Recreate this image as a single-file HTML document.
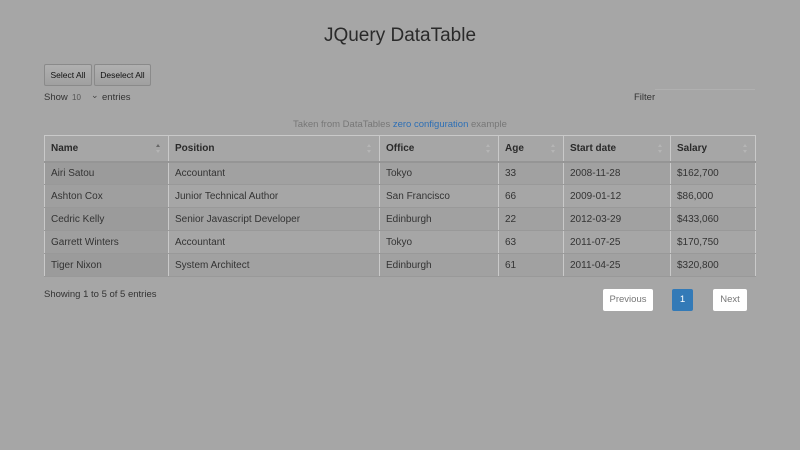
<!DOCTYPE html>
<html><head><meta charset="utf-8"><style>
*{box-sizing:border-box;margin:0;padding:0}
body{width:800px;height:450px;background:#a6a6a6;font-family:"Liberation Sans",sans-serif;color:#333;position:relative;overflow:hidden}
.a{position:absolute}
h1{position:absolute;top:25px;left:0;width:800px;text-align:center;font-weight:normal;font-size:19px;color:#2a2a2a}
.btn{position:absolute;top:64px;height:22px;border:1px solid #8a8a8a;background:linear-gradient(#b0b0b0,#a0a0a0);font-size:8.5px;color:#111;text-align:center;line-height:20px;border-radius:2px}
table{position:absolute;left:44px;top:135px;width:712px;border-collapse:collapse;font-size:10px}
th,td{border-left:1px solid #c9c9c9;border-right:1px solid #c9c9c9;text-align:left}
th{height:26px;padding-left:6px;font-weight:bold;color:#2a2a2a;border-top:1px solid #c9c9c9;border-bottom:2px solid #959595;position:relative}
th:after{content:"";position:absolute;right:8px;top:8px;width:0;height:0;border-left:2.5px solid transparent;border-right:2.5px solid transparent;border-bottom:3px solid #b5b5b5;}
th:before{content:"";position:absolute;right:8px;top:14px;width:0;height:0;border-left:2.5px solid transparent;border-right:2.5px solid transparent;border-top:3px solid #b5b5b5;}
th.s:after{border-bottom-color:#666}
td{height:23px;padding-left:6px;border-bottom:1px solid #999;color:#333}
tr.o td{background:#a1a1a1}
td.n{background:#9f9f9f}
tr.o td.n{background:#9b9b9b}
.pg{position:absolute;top:289px;height:22px;font-size:9.5px;line-height:22px;text-align:center;border-radius:2px}
</style></head><body>
<h1>JQuery DataTable</h1>
<div class="btn" style="left:44px;width:48px">Select All</div>
<div class="btn" style="left:94px;width:57px">Deselect All</div>
<div class="a" style="left:44px;top:92px;font-size:9.5px">Show</div>
<div class="a" style="left:72px;top:93px;font-size:8px;color:#555">10</div>
<div class="a" style="left:91px;top:90px;font-size:9px;color:#444">⌄</div>
<div class="a" style="left:102px;top:92px;font-size:9.5px">entries</div>
<div class="a" style="left:634px;top:92px;font-size:9.5px">Filter</div>
<div class="a" style="left:655px;top:89px;width:100px;border-top:1px solid #b0b0b0"></div>
<div class="a" style="left:0;width:800px;text-align:center;top:119px;font-size:9.5px;color:#777">Taken from DataTables <span style="color:#2d6fb5">zero configuration</span> example</div>
<table>
<tr><th class="s" style="width:124px">Name</th><th style="width:211px">Position</th><th style="width:119px">Office</th><th style="width:65px">Age</th><th style="width:107px">Start date</th><th>Salary</th></tr>
<tr class="o"><td class="n">Airi Satou</td><td>Accountant</td><td>Tokyo</td><td>33</td><td>2008-11-28</td><td>$162,700</td></tr>
<tr><td class="n">Ashton Cox</td><td>Junior Technical Author</td><td>San Francisco</td><td>66</td><td>2009-01-12</td><td>$86,000</td></tr>
<tr class="o"><td class="n">Cedric Kelly</td><td>Senior Javascript Developer</td><td>Edinburgh</td><td>22</td><td>2012-03-29</td><td>$433,060</td></tr>
<tr><td class="n">Garrett Winters</td><td>Accountant</td><td>Tokyo</td><td>63</td><td>2011-07-25</td><td>$170,750</td></tr>
<tr class="o"><td class="n">Tiger Nixon</td><td>System Architect</td><td>Edinburgh</td><td>61</td><td>2011-04-25</td><td>$320,800</td></tr>
</table>
<div class="a" style="left:44px;top:289px;font-size:9.5px">Showing 1 to 5 of 5 entries</div>
<div class="pg" style="left:603px;width:50px;background:#fff;color:#777">Previous</div>
<div class="pg" style="left:672px;width:21px;background:#337ab7;color:#fff">1</div>
<div class="pg" style="left:713px;width:34px;background:#fff;color:#777">Next</div>
</body></html>
